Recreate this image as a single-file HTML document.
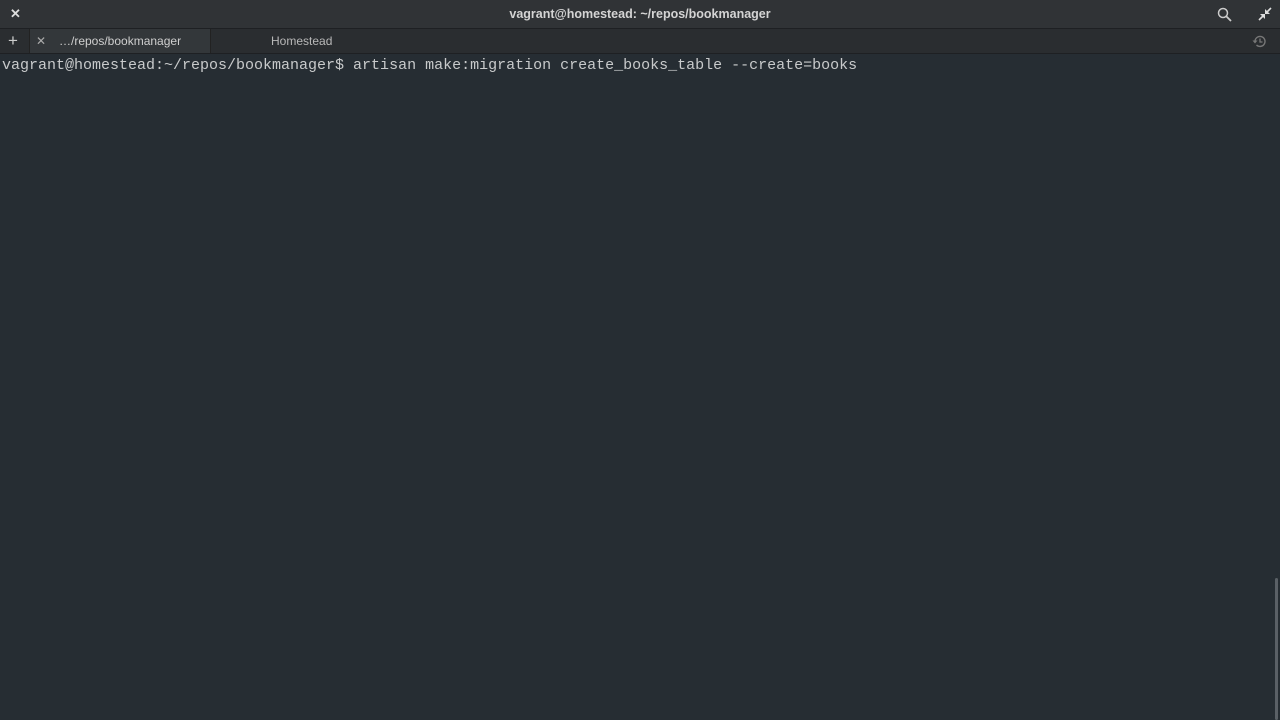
<!DOCTYPE html>
<html><head><style>
body{margin:0;width:1280px;height:720px;background:#262d33;overflow:hidden;position:relative;font-family:"Liberation Sans",sans-serif}
#title{position:absolute;left:0;top:0;width:1280px;height:28px;background:#303336;border-bottom:1px solid #1e2023}
#title .t{position:absolute;left:0;width:1280px;top:7px;text-align:center;color:#d4d4d4;font-size:12.5px;font-weight:bold}
#tabs{position:absolute;left:0;top:29px;width:1280px;height:24px;background:#2a2d30;border-bottom:1px solid #1e2023}
.tab{position:absolute;top:0;height:24px;font-size:12px;color:#cfcfcf;line-height:24px}
#act{left:29px;width:180px;background:#33373a;border-left:1px solid #222;border-right:1px solid #222}
#term{position:absolute;left:2px;top:57px;font-family:"Liberation Mono",monospace;font-size:15px;color:#c8cacb;white-space:pre;line-height:18px}
#sb{position:absolute;right:2px;top:578px;width:3px;height:142px;background:#5a6066;border-radius:2px}
</style></head><body>
<div id="title"><span style="position:absolute;left:10px;top:6px;color:#ddd;font-size:13px;font-weight:bold">✕</span><div class="t">vagrant@homestead: ~/repos/bookmanager</div>
<svg style="position:absolute;left:1217px;top:7px" width="16" height="16"><circle cx="6" cy="6" r="4.5" fill="none" stroke="#ccc" stroke-width="1.5"/><line x1="9.5" y1="9.5" x2="14" y2="14" stroke="#ccc" stroke-width="1.8"/></svg>
<svg style="position:absolute;left:1258px;top:7px" width="14" height="14"><path d="M1 13L6 8M8 6L13 1" stroke="#ddd" stroke-width="1.6"/><path d="M2 7H7V12Z M12 7H7V2Z" fill="#ddd"/></svg>
</div>
<div id="tabs">
<span class="tab" style="left:8px;font-size:17px;color:#ccc">+</span>
<div class="tab" id="act"><span style="position:absolute;left:6px;color:#aaa">✕</span><span style="position:absolute;left:29px">…/repos/bookmanager</span></div>
<span class="tab" style="left:271px;color:#b8b8b8">Homestead</span>
<svg style="position:absolute;left:1252px;top:5px" width="15" height="15"><path d="M3 7.5A5 5 0 1 1 4.5 11" fill="none" stroke="#777" stroke-width="1.4"/><path d="M0.5 6.5L3 9.5L5.5 6.5Z" fill="#777"/><path d="M8 4.5V8H10.5" fill="none" stroke="#777" stroke-width="1.3"/></svg>
</div>
<div id="term">vagrant@homestead:~/repos/bookmanager$ artisan make:migration create_books_table --create=books</div>
<div id="sb"></div>
</body></html>
